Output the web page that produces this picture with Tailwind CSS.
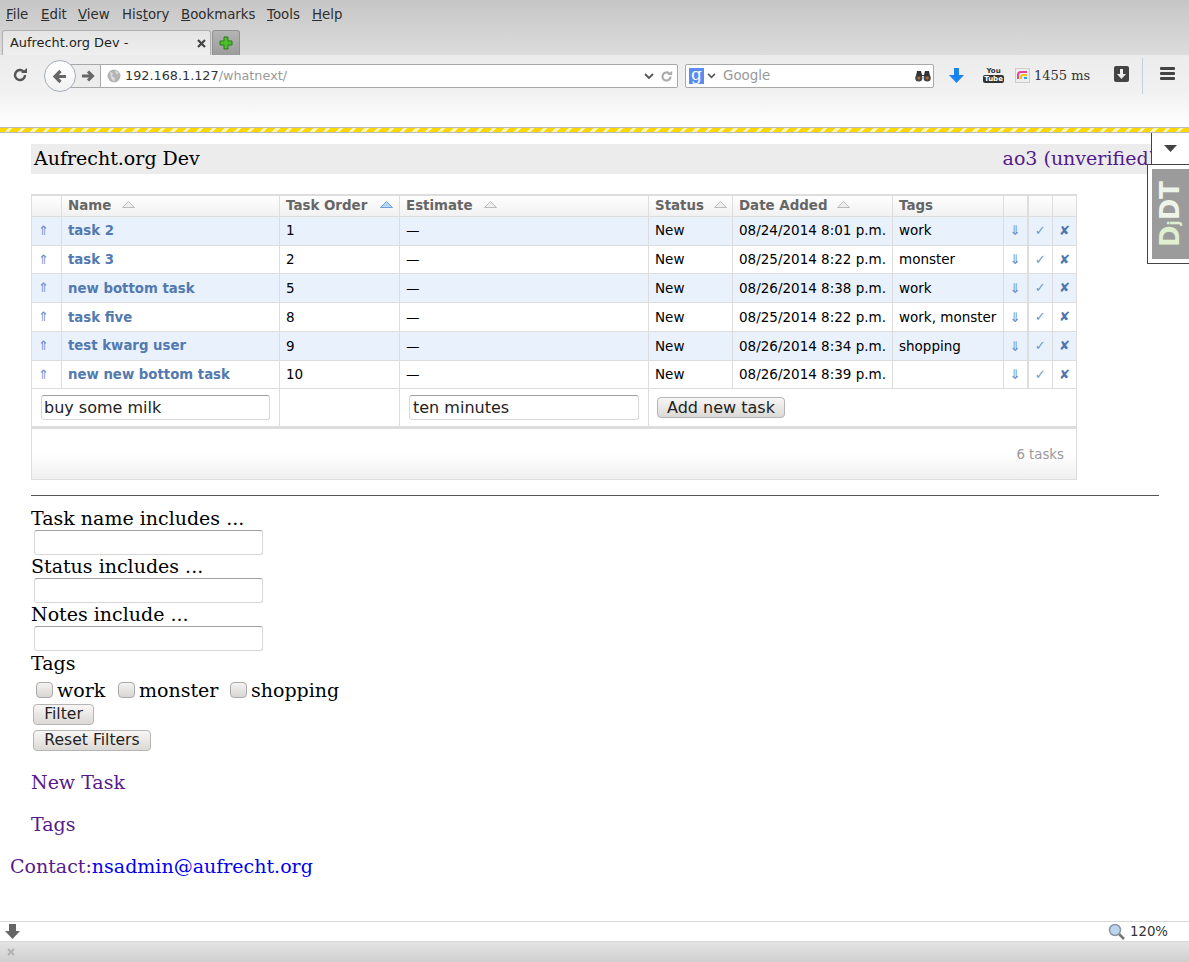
<!DOCTYPE html>
<html lang="en">
<head>
  <meta charset="UTF-8" />
  <meta name="viewport" content="width=device-width, initial-scale=1.0" />
  <title>Aufrecht.org Dev</title>
  <script src="https://cdn.jsdelivr.net/npm/@tailwindcss/browser@4"></script>
</head>
<body class="bg-white">
<div class="relative flex flex-col h-[962px] overflow-hidden font-['DejaVu_Sans',sans-serif]">

  <!-- Browser chrome -->
  <header class="shrink-0">
    <div class="bg-gradient-to-b from-[#c6c6c6] to-[#dcdcdc] h-[55px]">
      <nav class="flex h-[30px] items-center pl-[6px] text-[13.333px] text-[#2e2e2e]">
        <span class="w-[35px]"><u>F</u>ile</span>
        <span class="w-[37px]"><u>E</u>dit</span>
        <span class="w-[44px]"><u>V</u>iew</span>
        <span class="w-[59px]">His<u>t</u>ory</span>
        <span class="w-[86px]"><u>B</u>ookmarks</span>
        <span class="w-[45px]"><u>T</u>ools</span>
        <span><u>H</u>elp</span>
      </nav>
      <div class="flex h-[25px] items-end pl-[2px] gap-[1px]">
        <div class="flex items-center justify-between w-[209px] h-[25px] pl-[7px] pr-[4px] rounded-t-[3px] border border-b-0 border-[#b0b0b0] bg-gradient-to-b from-[#e4e4e4] to-[#efefef] text-[12.900px] text-[#222]">
          <span>Aufrecht.org Dev -</span>
          <svg class="w-[9px] h-[9px]" viewBox="0 0 9 9"><path d="M1 1l7 7M8 1L1 8" stroke="#444" stroke-width="2.2"/></svg>
        </div>
        <div class="flex items-center justify-center w-[28px] h-[25px] rounded-t-[3px] border border-b-0 border-[#909090] bg-gradient-to-b from-[#b4b4b4] to-[#9c9c9c]">
          <svg class="w-[14px] h-[14px]" viewBox="0 0 14 14"><path d="M5 1h4v4h4v4H9v4H5V9H1V5h4z" fill="#4cc02c" stroke="#2a7a18"/></svg>
        </div>
      </div>
    </div>

    <div class="flex items-start h-[72px] bg-gradient-to-b from-[#ececec] via-[#f1f1f1] to-white pt-[8px]">
      <svg class="w-[16px] h-[16px] ml-[12px] mt-[4px] shrink-0" viewBox="0 0 16 16"><path d="M13 8a5 5 0 1 1-1.6-3.7" fill="none" stroke="#555" stroke-width="2.4"/><path d="M9 6h6V1z" fill="#555"/></svg>
      <div class="relative flex items-center ml-[16px] h-[24px] mt-[1px] w-[634px]">
        <div class="flex items-center justify-end ml-[16px] w-[41px] h-full bg-[#ececec] border-y border-r border-[#a8a8a8] pr-[5px]">
          <svg class="w-[15px] h-[14px]" viewBox="0 0 15 14"><path d="M2 7h10M8 2.500L12.500 7 8 11.500" fill="none" stroke="#666" stroke-width="3"/></svg>
        </div>
        <div class="absolute left-0 top-[-4px] flex items-center justify-center w-[32px] h-[32px] rounded-full border border-[#a4aeba] bg-gradient-to-b from-white to-[#f2f2f2]">
          <svg class="w-[16px] h-[15px]" viewBox="0 0 16 15"><path d="M14 7.500H4M8.500 2L3 7.500 8.500 13" fill="none" stroke="#666" stroke-width="3.200"/></svg>
        </div>
        <div class="flex flex-1 items-center h-full bg-white border-y border-r border-[#a8a8a8] rounded-r-[2px]">
          <svg class="w-[14px] h-[14px] ml-[6px] shrink-0" viewBox="0 0 14 14"><circle cx="7" cy="7" r="6.500" fill="#b4b4b4"/><path d="M3 3l3 1-1 3 3 2-1 4-3-4zM8 1l4 3-3 1z" fill="#dcdcdc"/></svg>
          <span class="ml-[4px] text-[12.800px] text-[#333]">192.168.1.127<span class="text-[#999]">/whatnext/</span></span>
          <svg class="w-[10px] h-[7px] ml-auto" viewBox="0 0 10 7"><path d="M1 1l4 4 4-4" fill="none" stroke="#555" stroke-width="1.8"/></svg>
          <svg class="w-[13px] h-[13px] ml-[6px] mr-[4px]" viewBox="0 0 16 16"><path d="M13 8a5 5 0 1 1-1.6-3.7" fill="none" stroke="#aaa" stroke-width="2.6"/><path d="M9 6h6V1z" fill="#aaa"/></svg>
        </div>
      </div>
      <div class="flex items-center ml-[7px] h-[24px] mt-[1px] w-[249px] border border-[#a8a8a8] rounded-[2px] bg-white pl-[3px] pr-[2px]">
        <span class="flex items-center justify-center w-[15px] h-[16px] pb-[3px] bg-[#5b8cf0] text-white text-[17px] leading-none font-['DejaVu_Serif',serif]">g</span>
        <svg class="w-[9px] h-[6px] ml-[3px]" viewBox="0 0 10 7"><path d="M1 1l4 4 4-4" fill="none" stroke="#555" stroke-width="1.8"/></svg>
        <span class="ml-[7px] text-[13.400px] text-[#999]">Google</span>
        <svg class="w-[16px] h-[12px] ml-auto" viewBox="0 0 16 12"><circle cx="3.8" cy="8" r="3.6" fill="#444"/><circle cx="12.2" cy="8" r="3.6" fill="#444"/><path d="M2 1h4l1 4h2l1-4h4l1 5H1z" fill="#333"/><circle cx="3.8" cy="8" r="1.6" fill="#a5683a"/><circle cx="12.2" cy="8" r="1.6" fill="#a5683a"/></svg>
      </div>
      <svg class="w-[15px] h-[15px] ml-[15px] mt-[5px] shrink-0" viewBox="0 0 15 15"><path d="M5 0h5v7h5l-7.500 8L0 7h5z" fill="#1a84ee"/></svg>
      <div class="flex flex-col items-center ml-[22px] mt-[4px] w-[15px] text-[7px] leading-[8px] font-bold text-[#333]">
        <span>You</span>
        <span class="bg-[#333] text-white rounded-[2px] px-[1px]">Tube</span>
      </div>
      <div class="flex items-center ml-[14px] mt-[3px]">
        <svg class="w-[15px] h-[15px]" viewBox="0 0 15 15"><rect x=".5" y=".5" width="14" height="14" fill="#eee" stroke="#ccc"/><path d="M12 4H6a3 3 0 0 0-3 3v4" fill="none" stroke="#e8439a" stroke-width="2"/><path d="M12 7H8a2 2 0 0 0-2 2v2" fill="none" stroke="#f0c020" stroke-width="2"/><path d="M12 10h-3" stroke="#30a0e0" stroke-width="2"/></svg>
        <span class="ml-[4px] text-[13px] text-[#333] font-['DejaVu_Serif',serif]">1455 ms</span>
      </div>
      <span class="flex items-center justify-center ml-[24px] mt-[3px] w-[15px] h-[16px] rounded-[2px] bg-[#444]">
        <svg class="w-[9px] h-[10px]" viewBox="0 0 9 10"><path d="M3 0h3v5h3l-4.500 5L0 5h3z" fill="#eee"/></svg>
      </span>
      <div class="ml-[13px] mt-[-5px] w-[1px] h-[36px] bg-[#c3cfdc]"></div>
      <div class="flex flex-col gap-[2px] ml-[17px] mt-[4px]">
        <span class="w-[15px] h-[3px] bg-[#444] rounded-[1px]"></span>
        <span class="w-[15px] h-[3px] bg-[#444] rounded-[1px]"></span>
        <span class="w-[15px] h-[3px] bg-[#444] rounded-[1px]"></span>
      </div>
    </div>
    <div class="h-[6px] border-y border-[#bbb] bg-[repeating-linear-gradient(135deg,#ffd700_0,#ffd700_6px,#fff6b8_6px,#fff6b8_9px)]"></div>
  </header>

  <!-- Page -->
  <main class="relative flex-1 pl-[31px] pt-[11px] font-['DejaVu_Serif',serif] text-[19px] text-black overflow-hidden">
    <div class="flex justify-between items-center w-[1128px] h-[30px] bg-[#ececec] pl-[3px] pb-[1px]">
      <span>Aufrecht.org Dev</span>
      <a href="#" class="text-[#551a8b] whitespace-nowrap mr-[3px]">ao3 (unverified)</a>
    </div>

    <table class="table-fixed w-[1045px] mt-[20px] border-collapse border-t-2 border-[#ddd] font-['DejaVu_Sans',sans-serif] text-[13.500px]">
      <colgroup>
        <col class="w-[30px]" /><col class="w-[218px]" /><col class="w-[120px]" /><col class="w-[249px]" /><col class="w-[84px]" /><col class="w-[160px]" /><col class="w-[111px]" /><col class="w-[24px]" /><col class="w-[25px]" /><col class="w-[24px]" />
      </colgroup>
      <thead>
        <tr class="h-[21px] leading-none bg-gradient-to-b from-white to-[#f1f1f1] text-left text-[#666] font-bold text-[13.400px]">
          <th class="border border-[#ddd]"></th>
          <th class="border border-[#ddd] pl-[6px]">Name<svg class="inline w-[13px] h-[7px] ml-[11px] mb-[3px]" viewBox="0 0 13 7"><path d="M6.500 .5L12.500 6.500H.5z" fill="#eee" stroke="#bbb"/></svg></th>
          <th class="border border-[#ddd] pl-[6px] whitespace-nowrap">Task Order<svg class="inline w-[13px] h-[7px] ml-[13px] mb-[3px]" viewBox="0 0 13 7"><path d="M6.500 .5L12.500 6.500H.5z" fill="#b8d4f4" stroke="#6fa3e0"/></svg></th>
          <th class="border border-[#ddd] pl-[6px]">Estimate<svg class="inline w-[13px] h-[7px] ml-[11px] mb-[3px]" viewBox="0 0 13 7"><path d="M6.500 .5L12.500 6.500H.5z" fill="#eee" stroke="#bbb"/></svg></th>
          <th class="border border-[#ddd] pl-[6px]">Status<svg class="inline w-[13px] h-[7px] ml-[10px] mb-[3px]" viewBox="0 0 13 7"><path d="M6.500 .5L12.500 6.500H.5z" fill="#eee" stroke="#bbb"/></svg></th>
          <th class="border border-[#ddd] pl-[6px]">Date Added<svg class="inline w-[13px] h-[7px] ml-[9px] mb-[3px]" viewBox="0 0 13 7"><path d="M6.500 .5L12.500 6.500H.5z" fill="#eee" stroke="#bbb"/></svg></th>
          <th class="border border-[#ddd] pl-[6px]">Tags</th>
          <th class="border border-[#ddd]"></th>
          <th class="border border-[#ddd] border-l-2"></th>
          <th class="border border-[#ddd]"></th>
        </tr>
      </thead>
      <tbody>
        <tr class="h-[29px] bg-[#e9f1fd]">
          <td class="border border-[#ddd] pl-[6px] text-[13px] text-[#6c8cc8]">⇑</td>
          <td class="border border-[#ddd] pl-[6px] pt-[1px] font-bold text-[13.300px] text-[#5279b0]"><a href="#">task 2</a></td>
          <td class="border border-[#ddd] pl-[6px]">1</td>
          <td class="border border-[#ddd] pl-[6px]">—</td>
          <td class="border border-[#ddd] pl-[6px]">New</td>
          <td class="border border-[#ddd] pl-[6px] whitespace-nowrap">08/24/2014 8:01 p.m.</td>
          <td class="border border-[#ddd] pl-[6px] whitespace-nowrap">work</td>
          <td class="border border-[#ddd] text-center text-[#6c8cc8]">⇓</td>
          <td class="border border-[#ddd] border-l-2 text-center text-[13px] text-[#6c9ac8]">✓</td>
          <td class="border border-[#ddd] text-center text-[13px] text-[#4d76b0]">✘</td>
        </tr>
        <tr class="h-[28.800px] bg-white">
          <td class="border border-[#ddd] pl-[6px] text-[13px] text-[#6c8cc8]">⇑</td>
          <td class="border border-[#ddd] pl-[6px] pt-[1px] font-bold text-[13.300px] text-[#5279b0]"><a href="#">task 3</a></td>
          <td class="border border-[#ddd] pl-[6px]">2</td>
          <td class="border border-[#ddd] pl-[6px]">—</td>
          <td class="border border-[#ddd] pl-[6px]">New</td>
          <td class="border border-[#ddd] pl-[6px] whitespace-nowrap">08/25/2014 8:22 p.m.</td>
          <td class="border border-[#ddd] pl-[6px] whitespace-nowrap">monster</td>
          <td class="border border-[#ddd] text-center text-[#6c8cc8]">⇓</td>
          <td class="border border-[#ddd] border-l-2 text-center text-[13px] text-[#6c9ac8]">✓</td>
          <td class="border border-[#ddd] text-center text-[13px] text-[#4d76b0]">✘</td>
        </tr>
        <tr class="h-[28.800px] bg-[#e9f1fd]">
          <td class="border border-[#ddd] pl-[6px] text-[13px] text-[#6c8cc8]">⇑</td>
          <td class="border border-[#ddd] pl-[6px] pt-[1px] font-bold text-[13.300px] text-[#5279b0]"><a href="#">new bottom task</a></td>
          <td class="border border-[#ddd] pl-[6px]">5</td>
          <td class="border border-[#ddd] pl-[6px]">—</td>
          <td class="border border-[#ddd] pl-[6px]">New</td>
          <td class="border border-[#ddd] pl-[6px] whitespace-nowrap">08/26/2014 8:38 p.m.</td>
          <td class="border border-[#ddd] pl-[6px] whitespace-nowrap">work</td>
          <td class="border border-[#ddd] text-center text-[#6c8cc8]">⇓</td>
          <td class="border border-[#ddd] border-l-2 text-center text-[13px] text-[#6c9ac8]">✓</td>
          <td class="border border-[#ddd] text-center text-[13px] text-[#4d76b0]">✘</td>
        </tr>
        <tr class="h-[28.800px] bg-white">
          <td class="border border-[#ddd] pl-[6px] text-[13px] text-[#6c8cc8]">⇑</td>
          <td class="border border-[#ddd] pl-[6px] pt-[1px] font-bold text-[13.300px] text-[#5279b0]"><a href="#">task five</a></td>
          <td class="border border-[#ddd] pl-[6px]">8</td>
          <td class="border border-[#ddd] pl-[6px]">—</td>
          <td class="border border-[#ddd] pl-[6px]">New</td>
          <td class="border border-[#ddd] pl-[6px] whitespace-nowrap">08/25/2014 8:22 p.m.</td>
          <td class="border border-[#ddd] pl-[6px] whitespace-nowrap">work, monster</td>
          <td class="border border-[#ddd] text-center text-[#6c8cc8]">⇓</td>
          <td class="border border-[#ddd] border-l-2 text-center text-[13px] text-[#6c9ac8]">✓</td>
          <td class="border border-[#ddd] text-center text-[13px] text-[#4d76b0]">✘</td>
        </tr>
        <tr class="h-[28.800px] bg-[#e9f1fd]">
          <td class="border border-[#ddd] pl-[6px] text-[13px] text-[#6c8cc8]">⇑</td>
          <td class="border border-[#ddd] pl-[6px] pt-[1px] font-bold text-[13.300px] text-[#5279b0]"><a href="#">test kwarg user</a></td>
          <td class="border border-[#ddd] pl-[6px]">9</td>
          <td class="border border-[#ddd] pl-[6px]">—</td>
          <td class="border border-[#ddd] pl-[6px]">New</td>
          <td class="border border-[#ddd] pl-[6px] whitespace-nowrap">08/26/2014 8:34 p.m.</td>
          <td class="border border-[#ddd] pl-[6px] whitespace-nowrap">shopping</td>
          <td class="border border-[#ddd] text-center text-[#6c8cc8]">⇓</td>
          <td class="border border-[#ddd] border-l-2 text-center text-[13px] text-[#6c9ac8]">✓</td>
          <td class="border border-[#ddd] text-center text-[13px] text-[#4d76b0]">✘</td>
        </tr>
        <tr class="h-[28.800px] bg-white">
          <td class="border border-[#ddd] pl-[6px] text-[13px] text-[#6c8cc8]">⇑</td>
          <td class="border border-[#ddd] pl-[6px] pt-[1px] font-bold text-[13.300px] text-[#5279b0]"><a href="#">new new bottom task</a></td>
          <td class="border border-[#ddd] pl-[6px]">10</td>
          <td class="border border-[#ddd] pl-[6px]">—</td>
          <td class="border border-[#ddd] pl-[6px]">New</td>
          <td class="border border-[#ddd] pl-[6px] whitespace-nowrap">08/26/2014 8:39 p.m.</td>
          <td class="border border-[#ddd] pl-[6px]"></td>
          <td class="border border-[#ddd] text-center text-[#6c8cc8]">⇓</td>
          <td class="border border-[#ddd] border-l-2 text-center text-[13px] text-[#6c9ac8]">✓</td>
          <td class="border border-[#ddd] text-center text-[13px] text-[#4d76b0]">✘</td>
        </tr>
        <!-- add task row -->
        <tr class="h-[38px]">
          <td colspan="2" class="border border-[#ddd] pl-[9px]">
            <input value="buy some milk" class="block w-[229px] h-[25px] px-[2px] text-[16px] text-[#222] border border-[#d8d8d8] border-t-[#a0a0a0] rounded-[3px] bg-white" />
          </td>
          <td class="border border-[#ddd]"></td>
          <td class="border border-[#ddd] pl-[9px]">
            <input value="ten minutes" class="block w-[230px] h-[25px] px-[3px] text-[16px] text-[#222] border border-[#d8d8d8] border-t-[#a0a0a0] rounded-[3px] bg-white" />
          </td>
          <td colspan="6" class="border border-[#ddd] pl-[8px]">
            <button class="block h-[21px] w-[128px] text-[16px] leading-none text-[#222] border border-[#b5b5b5] rounded-[4px] bg-gradient-to-b from-[#f8f7f6] to-[#dbd9d5]">Add new task</button>
          </td>
        </tr>
      </tbody>
    </table>
    <div class="flex items-center justify-end w-[1046px] h-[53px] pt-[1px] pr-[12px] border border-t-2 border-[#ddd] bg-gradient-to-b from-white via-white to-[#efefef] font-['DejaVu_Sans',sans-serif] text-[13.300px] text-[#999]">6 tasks</div>

    <hr class="w-[1128px] mt-[15px] border-t border-[#555]" />

    <form class="mt-[11px]">
      <label class="block h-[23px] leading-[23px]">Task name includes ...</label>
      <input class="block ml-[3px] w-[229px] h-[25px] border border-[#d8d8d8] border-t-[#a0a0a0] rounded-[3px] bg-white" />
      <label class="block h-[23px] leading-[23px]">Status includes ...</label>
      <input class="block ml-[3px] w-[229px] h-[25px] border border-[#d8d8d8] border-t-[#a0a0a0] rounded-[3px] bg-white" />
      <label class="block h-[23px] leading-[23px]">Notes include ...</label>
      <input class="block ml-[3px] w-[229px] h-[25px] border border-[#d8d8d8] border-t-[#a0a0a0] rounded-[3px] bg-white" />
      <div class="mt-[1px] h-[23px] leading-[23px]">Tags</div>
      <div class="flex items-center h-[28px] mt-[1px] ml-[5px]">
        <input type="checkbox" class="appearance-none w-[17px] h-[16px] rounded-[4px] border border-[#aaa] bg-gradient-to-b from-[#f4f3f2] to-[#d8d6d2]" />
        <span class="ml-[4px] w-[61px]">work</span>
        <input type="checkbox" class="appearance-none w-[17px] h-[16px] rounded-[4px] border border-[#aaa] bg-gradient-to-b from-[#f4f3f2] to-[#d8d6d2]" />
        <span class="ml-[4px] w-[91px]">monster</span>
        <input type="checkbox" class="appearance-none w-[17px] h-[16px] rounded-[4px] border border-[#aaa] bg-gradient-to-b from-[#f4f3f2] to-[#d8d6d2]" />
        <span class="ml-[4px]">shopping</span>
      </div>
      <button type="button" class="block ml-[2px] w-[61px] h-[21px] text-[15.600px] leading-none text-[#222] font-['DejaVu_Sans',sans-serif] border border-[#b5b5b5] rounded-[4px] bg-gradient-to-b from-[#f8f7f6] to-[#dbd9d5]">Filter</button>
      <button type="button" class="block ml-[2px] mt-[5px] w-[118px] h-[21px] text-[15.600px] leading-none text-[#222] font-['DejaVu_Sans',sans-serif] border border-[#b5b5b5] rounded-[4px] bg-gradient-to-b from-[#f8f7f6] to-[#dbd9d5]">Reset Filters</button>
    </form>

    <p class="mt-[20px] h-[23px] leading-[23px]"><a href="#" class="text-[#551a8b]">New Task</a></p>
    <p class="mt-[19px] h-[23px] leading-[23px]"><a href="#" class="text-[#551a8b]">Tags</a></p>
    <p class="-ml-[21px] mt-[19px] h-[23px] leading-[23px] text-[#551a8b]">Contact:<a href="#" class="text-[#0000ee]">nsadmin@aufrecht.org</a></p>

    <!-- debug toolbar handle, floats over the page -->
    <aside class="absolute right-0 top-0 w-[42px]">
      <div class="flex justify-center items-center ml-[4px] h-[31px] bg-white border-l border-[#444]">
        <svg class="w-[13px] h-[7px]" viewBox="0 0 13 7"><path d="M0 0h13L6.500 7z" fill="#444"/></svg>
      </div>
      <div class="h-[100px] border border-r-0 border-[#444] bg-white pl-[4px] pt-[4px] pb-[4px]">
        <div class="flex items-center justify-center h-full bg-[#9b9b9b]">
          <span class="-rotate-90 whitespace-nowrap font-['DejaVu_Sans',sans-serif] font-bold text-[26px] leading-none text-[#dff0d0]">D<span class="text-[15px]">j</span><span class="text-[#eef4ea]">DT</span></span>
        </div>
      </div>
    </aside>
  </main>

  <!-- Status bars -->
  <footer class="shrink-0 font-['DejaVu_Sans',sans-serif]">
    <div class="flex items-center justify-between h-[21px] border-y border-[#d8d8d8] bg-white pl-[5px] pr-[21px]">
      <svg class="w-[15px] h-[15px]" viewBox="0 0 15 15"><path d="M4 0h7v7h4l-7.500 8L0 7h4z" fill="#666"/></svg>
      <div class="flex items-center gap-[5px] text-[13.300px] text-[#333]">
        <svg class="w-[17px] h-[17px]" viewBox="0 0 17 17"><path d="M10 10l6 6" stroke="#777" stroke-width="2.500"/><circle cx="7" cy="7" r="5.500" fill="#bcd4ee" stroke="#8a96a4" stroke-width="1.500"/></svg>
        <span>120%</span>
      </div>
    </div>
    <div class="flex items-center h-[20px] bg-gradient-to-b from-[#e4e4e4] to-[#cfcfcf] pl-[7px]">
      <svg class="w-[8px] h-[8px]" viewBox="0 0 8 8"><path d="M1 1l6 6M7 1L1 7" stroke="#b0b0b0" stroke-width="1.800"/></svg>
    </div>
  </footer>
</div>
</body>
</html>
